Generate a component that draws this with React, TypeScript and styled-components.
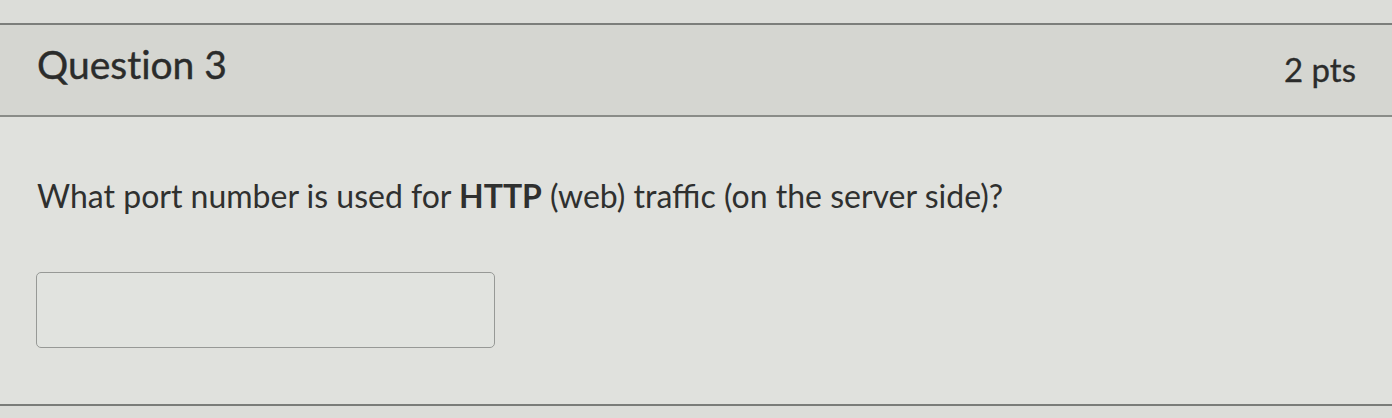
import React from "react";
import styled, { createGlobalStyle } from "styled-components";

const Global = createGlobalStyle`
  html, body { margin: 0; padding: 0; }
  body {
    background: #dcddd9;
    font-family: Lato, "Liberation Sans", sans-serif;
    color: #2d2f2e;
    width: 1392px;
    height: 418px;
    overflow: hidden;
  }
`;

const Page = styled.div`
  padding-top: 23px;
`;

const Card = styled.section`
  border-top: 2px solid #7c7e7b;
  border-bottom: 2px solid #7a7c79;
  background: #e0e1dd;
`;

const Header = styled.header`
  display: flex;
  align-items: center;
  justify-content: space-between;
  height: 90px;
  padding: 0 36px 0 37px;
  background: #d5d6d1;
  border-bottom: 2px solid #8a8c88;
`;

const Title = styled.h2`
  margin: 0;
  font-size: 39px;
  font-weight: 400;
  color: #2b2c2b;
  font-variant-ligatures: no-common-ligatures;
  -webkit-text-stroke: 0.4px #2b2c2b;
  transform: translateY(-6px);
`;

const Points = styled.span`
  font-size: 33px;
  color: #2b2c2b;
  -webkit-text-stroke: 0.3px #2b2c2b;
  transform: translateY(-1px);
`;

const Body = styled.div`
  padding: 58px 37px 56px 36px;
`;

const Prompt = styled.p`
  margin: 0 0 55px 1px;
  font-size: 32px;
  line-height: 42px;
  color: #2f302f;
  b { font-weight: 700; }
`;

const Answer = styled.input`
  display: block;
  box-sizing: border-box;
  width: 459px;
  height: 76px;
  border: 1.5px solid #979996;
  border-radius: 5px;
  background: #e1e3df;
  outline: none;
`;

export default function App() {
  return (
    <>
      <Global />
      <Page>
        <Card>
          <Header>
            <Title>Question 3</Title>
            <Points>2 pts</Points>
          </Header>
          <Body>
            <Prompt>
              What port number is used for <b>HTTP</b> (web) traffic (on the server side)?
            </Prompt>
            <Answer type="text" aria-label="Answer" />
          </Body>
        </Card>
      </Page>
    </>
  );
}
